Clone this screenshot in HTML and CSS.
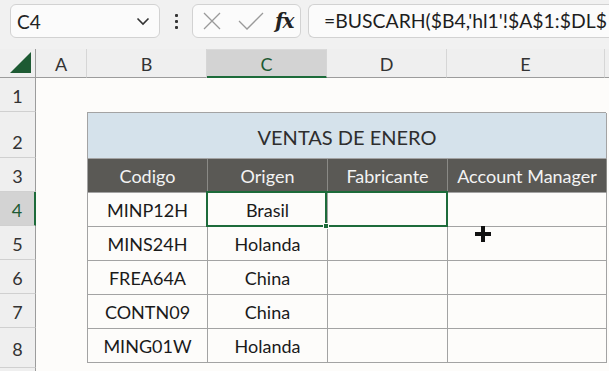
FILE: index.html
```html
<!DOCTYPE html>
<html>
<head>
<meta charset="utf-8">
<link rel="stylesheet" href="styles.css">
</head>
<body>
<div class="app">
  <div class="toolbar">
    <div class="namebox">
      <span class="name">C4</span>
      <svg class="chev" width="14" height="9" viewBox="0 0 14 9"><path d="M1.5 1.5 L7 7 L12.5 1.5" fill="none" stroke="#333" stroke-width="1.6"/></svg>
    </div>
    <div class="dots"><i></i><i></i><i></i></div>
    <div class="fxbox">
      <svg width="20" height="20" viewBox="0 0 20 20"><path d="M2 2 L18 18 M18 2 L2 18" stroke="#9a9a9a" stroke-width="1.3" fill="none"/></svg>
      <svg width="26" height="20" viewBox="0 0 26 20"><path d="M1 10 L9 18 L25 2" stroke="#9a9a9a" stroke-width="1.3" fill="none"/></svg>
      <span class="fx">fx</span>
    </div>
    <div class="formula">=BUSCARH($B4,'hl1'!$A$1:$DL$</div>
  </div>
  <div class="sheet">
    <div class="corner"><svg width="22" height="21" viewBox="0 0 22 21"><path d="M21 0 L21 21 L0 21 Z" fill="#1d5a33"/></svg></div>
    <div class="colh">A</div>
    <div class="colh">B</div>
    <div class="colh sel">C</div>
    <div class="colh">D</div>
    <div class="colh">E</div>
    <div class="colh last"></div>

    <div class="rowh r1">1</div>
    <div class="rowh r2">2</div>
    <div class="rowh r3">3</div>
    <div class="rowh r4 sel">4</div>
    <div class="rowh r5">5</div>
    <div class="rowh r6">6</div>
    <div class="rowh r7">7</div>
    <div class="rowh r8">8</div>
    <div class="rowh r9"></div>

    <div class="area">
      <div class="table">
        <div class="title">VENTAS DE ENERO</div>
        <div class="th">Codigo</div>
        <div class="th">Origen</div>
        <div class="th">Fabricante</div>
        <div class="th">Account Manager</div>
        <div class="td">MINP12H</div><div class="td">Brasil</div><div class="td"></div><div class="td"></div>
        <div class="td">MINS24H</div><div class="td">Holanda</div><div class="td"></div><div class="td"></div>
        <div class="td">FREA64A</div><div class="td">China</div><div class="td"></div><div class="td"></div>
        <div class="td">CONTN09</div><div class="td">China</div><div class="td"></div><div class="td"></div>
        <div class="td">MING01W</div><div class="td">Holanda</div><div class="td"></div><div class="td"></div>
      </div>
      <div class="selbox"></div>
      <div class="selsplit"></div>
      <div class="handle"></div>
      <svg class="cursor" width="16" height="16" viewBox="0 0 16 16"><path d="M6 0 H10 V6 H16 V10 H10 V16 H6 V10 H0 V6 H6 Z" fill="#111"/></svg>
    </div>
  </div>
</div>
</body>
</html>
```
FILE: styles.css
```css
* { box-sizing: border-box; }
html, body { margin: 0; padding: 0; }
body {
  width: 609px; height: 371px; overflow: hidden;
  font-family: Lato, "Open Sans", sans-serif;
  color: #222;
  background: #fdfcfa;
}
.app { width: 609px; height: 371px; display: flex; flex-direction: column; }
.toolbar {
  height: 49px; flex: none;
  background: #f1f1f1;
  display: flex; align-items: flex-start;
  padding: 4px 0 0 10px;
}
.namebox, .fxbox, .formula {
  height: 34px;
  background: #fbfbfb;
  border: 1px solid #d2d2d2;
  border-radius: 6px;
}
.namebox {
  width: 150px;
  display: flex; align-items: center; justify-content: space-between;
  padding: 0 9px 0 6px;
}
.name { font-size: 19px; color: #222; }
.dots {
  width: 32px; height: 34px;
  display: flex; flex-direction: column; align-items: center; justify-content: center; gap: 3px;
}
.dots i { display: block; width: 3px; height: 3px; background: #333; border-radius: 1px; }
.fxbox {
  width: 109px;
  display: flex; align-items: center;
  padding: 0 0 0 9px;
  gap: 16px;
}
.fx {
  font-family: "DejaVu Serif", serif; font-style: italic; font-weight: bold;
  font-size: 20px; color: #222; letter-spacing: -1px;
  margin-left: -5px;
}
.formula {
  flex: 1; margin-left: 7px;
  border-right: none; border-radius: 6px 0 0 6px;
  font-size: 19.4px; line-height: 31px;
  padding-left: 15px;
  white-space: nowrap; overflow: hidden;
  color: #1e1e1e;
}
.sheet {
  flex: 1;
  display: grid;
  grid-template-columns: 36px 51px 120px 120px 120px 158px 1fr;
  grid-template-rows: 29px 34px 46px 34px 34px 34px 34px 34px 1fr;
}
.corner {
  background: #efefef;
  border-right: 1px solid #9c9c9c;
  border-bottom: 1px solid #9c9c9c;
  display: flex; align-items: flex-end; justify-content: flex-end;
  padding: 0 3px 4px 0;
}
.colh {
  background: #efefef;
  border-bottom: 1px solid #9c9c9c;
  border-right: 1px solid #d6d6d6;
  display: flex; align-items: center; justify-content: center;
  font-size: 18px; color: #333;
  padding-top: 1px;
}
.colh.last { border-right: none; }
.colh.sel {
  background: #d3d3d3; color: #1d5a33;
  border-bottom: 2px solid #1d6b3a;
  border-top: 1px solid #dadada;
}
.rowh {
  grid-column: 1;
  background: #efefef;
  border-right: 1px solid #9c9c9c;
  border-bottom: 1px solid #d0d0d0;
  display: flex; align-items: center; justify-content: center;
  font-size: 18px; color: #333;
  padding-top: 3px;
}
.rowh.r2 { padding-top: 14px; }
.rowh.r9 { border-bottom: none; }
.rowh.sel {
  background: #d3d3d3; color: #1d5a33;
  border-right: 2px solid #1d6b3a;
}
.area {
  grid-column: 2 / 8;
  grid-row: 2 / 10;
  position: relative;
  background: #fdfcfa;
  padding: 34px 0 0 51px;
}
.table {
  width: 519px;
  display: grid;
  grid-template-columns: 120px 120px 120px 159px;
  grid-template-rows: 46px 34px 34px 34px 34px 34px 34px;
  border-left: 1px solid #a3a3a3;
  border-top: 1px solid #a3a3a3;
}
.table > div {
  border-right: 1px solid #a3a3a3;
  border-bottom: 1px solid #a3a3a3;
  display: flex; align-items: center; justify-content: center;
  font-size: 18px;
}
.title {
  grid-column: 1 / 5;
  background: #d5e2eb;
  color: #2e2e2e;
  font-size: 20px !important;
  padding-top: 2px;
}
.th {
  background: #5a5955;
  color: #f3f3f3;
  padding-top: 1px;
  border-right-color: #8a8a86 !important;
}
.th:last-child { border-right-color: #a3a3a3 !important; }
.td { color: #1a1a1a; padding-top: 1px; background: #fdfcfa; }
.selbox {
  position: absolute;
  left: 170px; top: 113px;
  width: 242px; height: 36px;
  border: 2px solid #1d6b3a;
}
.selsplit {
  position: absolute;
  left: 289px; top: 113px;
  width: 2px; height: 36px;
  background: #1d6b3a;
}
.handle {
  position: absolute;
  left: 287px; top: 145px;
  width: 6px; height: 6px;
  background: #1d6b3a;
  border: 1px solid #fdfcfa;
}
.cursor {
  position: absolute;
  left: 439px; top: 148px;
}
```
